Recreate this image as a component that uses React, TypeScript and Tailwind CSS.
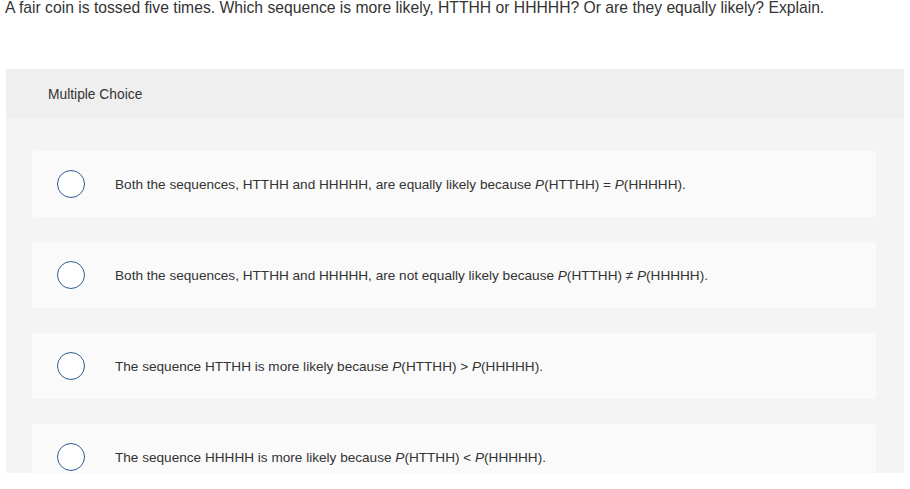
import React from "react";

const P = () => <span className="italic">P</span>;

const options: React.ReactNode[] = [
  <>Both the sequences, HTTHH and HHHHH, are equally likely because <P />(HTTHH) = <P />(HHHHH).</>,
  <>Both the sequences, HTTHH and HHHHH, are not equally likely because <P />(HTTHH) ≠ <P />(HHHHH).</>,
  <>The sequence HTTHH is more likely because <P />(HTTHH) &gt; <P />(HHHHH).</>,
  <>The sequence HHHHH is more likely because <P />(HTTHH) &lt; <P />(HHHHH).</>,
];

export default function App() {
  return (
    <div
      className="w-[910px] h-[489px] bg-white text-[#333333] overflow-hidden"
      style={{ fontFamily: '"Liberation Sans", Arial, sans-serif' }}
    >
      <p className="pl-[5px] pt-0 text-[15.7px] leading-[15px] h-[69px] whitespace-nowrap">
        A fair coin is tossed five times. Which sequence is more likely, HTTHH or HHHHH? Or are they equally likely? Explain.
      </p>
      <div className="ml-[6px] w-[898px] h-[404px] overflow-hidden bg-[#f4f4f4]">
        <div className="h-[49px] bg-[#efefef] flex items-center pl-[42px] text-[13.8px] pt-[3px]">
          Multiple Choice
        </div>
        <div className="flex flex-col gap-[25px] pt-[33px] pl-[26px] pr-[28px]">
          {options.map((o, i) => (
            <div
              key={i}
              className="h-[66px] shrink-0 rounded-[3px] bg-[#fafafa] flex items-center pl-[25px]"
            >
              <div className="w-[28px] h-[28px] rounded-full border-[1.5px] border-[#2e5e92] bg-white shrink-0" />
              <div className="ml-[30px] pt-[2px] text-[13.6px] leading-[16px] whitespace-nowrap">{o}</div>
            </div>
          ))}
        </div>
      </div>
    </div>
  );
}
